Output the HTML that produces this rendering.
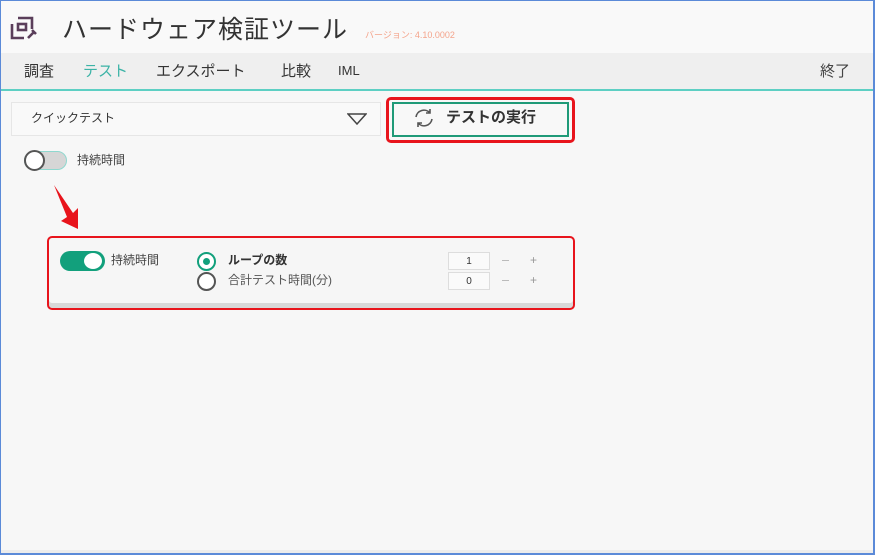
<!DOCTYPE html>
<html><head><meta charset="utf-8"><style>
*{margin:0;padding:0;box-sizing:border-box}
body{width:876px;height:556px;overflow:hidden;background:#fff;font-family:"Liberation Sans","Noto Sans CJK JP",sans-serif;position:relative}
.frame{position:absolute;left:0;top:0;width:875px;height:555px;border:1px solid #5b8ad8;border-right:2px solid #5b8ad8;border-bottom:2px solid #5b8ad8;background:#f7f7f7;overflow:hidden}
.a{position:absolute;white-space:nowrap}
</style></head><body>
<div class="frame">
 <div class="a" style="left:0;top:0;width:873px;height:52px;background:#f9f9f9"></div>
 <svg class="a" style="left:9px;top:15px" width="30" height="26" viewBox="0 0 30 26"><g fill="none" stroke="#5a3e5a" stroke-width="2.6"><path d="M8 2H22V13"/><path d="M2 8V22H14"/><rect x="8" y="8" width="8" height="6"/><path d="M18 22L24 16M22 14l4 4"/></g></svg>
 <div class="a" style="left:61px;top:9px;font-size:25px;color:#333;letter-spacing:1px">ハードウェア検証ツール</div>
 <div class="a" style="left:364px;top:27px;font-size:9px;color:#f4a48c">バージョン: 4.10.0002</div>
 <div class="a" style="left:0;top:52px;width:873px;height:38px;background:#efefef;border-bottom:2px solid #5dcfc3"></div>
 <div class="a" style="left:23px;top:59px;font-size:15px;color:#333">調査</div>
 <div class="a" style="left:82px;top:59px;font-size:15px;color:#3bb3a6">テスト</div>
 <div class="a" style="left:155px;top:59px;font-size:15px;color:#333">エクスポート</div>
 <div class="a" style="left:280px;top:59px;font-size:15px;color:#333">比較</div>
 <div class="a" style="left:337px;top:62px;font-size:13px;color:#333">IML</div>
 <div class="a" style="left:819px;top:59px;font-size:15px;color:#444">終了</div>
 <div class="a" style="left:10px;top:101px;width:370px;height:34px;background:#f9f9f9;border:1px solid #e6e6e6"></div>
 <div class="a" style="left:30px;top:108px;font-size:12px;color:#333">クイックテスト</div>
 <svg class="a" style="left:346px;top:112px" width="20" height="12"><path d="M1 1H19L10 11Z" fill="none" stroke="#444" stroke-width="1.5"/></svg>
 <div class="a" style="left:385px;top:96px;width:189px;height:46px;border:3px solid #e8141c;border-radius:5px"></div>
 <div class="a" style="left:391px;top:101px;width:177px;height:35px;border:2px solid #1f9a78;background:#f8f8f8"></div>
 <svg class="a" style="left:412px;top:107px" width="22" height="20" viewBox="0 0 22 20"><g fill="none" stroke="#555" stroke-width="1.6"><path d="M3 9A8 8 0 0 1 17 5M17 1V5H13"/><path d="M19 11A8 8 0 0 1 5 15M5 19V15H9"/></g></svg>
 <div class="a" style="left:445px;top:105px;font-size:15px;font-weight:bold;color:#333">テストの実行</div>
 <div class="a" style="left:23px;top:150px;width:43px;height:19px;border-radius:10px;background:#d6d6d6;border:1px solid #8fd8cf"></div>
 <div class="a" style="left:23px;top:149px;width:21px;height:21px;border-radius:50%;background:#fff;border:2px solid #555"></div>
 <div class="a" style="left:76px;top:150px;font-size:12px;color:#444">持続時間</div>
 <svg class="a" style="left:50px;top:182px" width="30" height="48"><path d="M3 2L22 30L27 25L27 46L10 38L16 34Z" fill="#e8141c"/></svg>
 <div class="a" style="left:46px;top:235px;width:528px;height:74px;border:2px solid #e8141c;border-radius:5px;background:#f6f6f6;box-shadow:inset 0 -5px 0 #d8d8d8"></div>
 <div class="a" style="left:59px;top:250px;width:45px;height:20px;border-radius:10px;background:#12a07c"></div>
 <div class="a" style="left:81px;top:250px;width:22px;height:20px;border-radius:50%;background:#fff;border:2px solid #12a07c"></div>
 <div class="a" style="left:110px;top:250px;font-size:12px;color:#444">持続時間</div>
 <div class="a" style="left:196px;top:251px;width:19px;height:19px;border-radius:50%;border:2px solid #12a07c;background:#fff"></div>
 <div class="a" style="left:202px;top:257px;width:7px;height:7px;border-radius:50%;background:#12a07c"></div>
 <div class="a" style="left:227px;top:250px;font-size:12px;font-weight:bold;color:#333">ループの数</div>
 <div class="a" style="left:196px;top:271px;width:19px;height:19px;border-radius:50%;border:2px solid #555;background:#fff"></div>
 <div class="a" style="left:227px;top:270px;font-size:12px;color:#555">合計テスト時間(分)</div>
 <div class="a" style="left:447px;top:251px;width:42px;height:18px;border:1px solid #ddd;background:#fafafa;font-size:10px;text-align:center;line-height:17px;color:#333">1</div>
 <div class="a" style="left:447px;top:271px;width:42px;height:18px;border:1px solid #ddd;background:#fafafa;font-size:10px;text-align:center;line-height:17px;color:#333">0</div>
 <div class="a" style="left:501px;top:259px;width:7px;height:1px;background:#bbb"></div>
 <div class="a" style="left:529px;top:252px;font-size:12px;color:#999">+</div>
 <div class="a" style="left:501px;top:279px;width:7px;height:1px;background:#bbb"></div>
 <div class="a" style="left:529px;top:272px;font-size:12px;color:#999">+</div>
 <div class="a" style="left:0;top:549px;width:873px;height:6px;background:#ececec"></div>
 <div class="a" style="left:530px;top:552px;width:31px;height:2px;background:#bbb"></div>
 <div class="a" style="left:561px;top:552px;width:31px;height:2px;background:#888"></div>
</div>
</body></html>
